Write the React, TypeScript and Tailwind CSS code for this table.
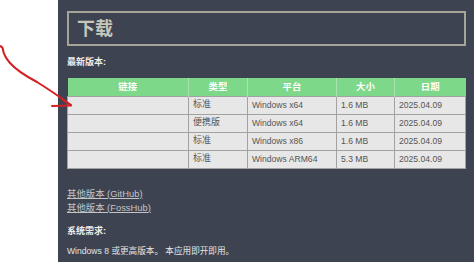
import React from 'react';

const rows = [
  { type: '标准', platform: 'Windows x64', size: '1.6 MB', date: '2025.04.09' },
  { type: '便携版', platform: 'Windows x64', size: '1.6 MB', date: '2025.04.09' },
  { type: '标准', platform: 'Windows x86', size: '1.6 MB', date: '2025.04.09' },
  { type: '标准', platform: 'Windows ARM64', size: '5.3 MB', date: '2025.04.09' },
];

const font = "font-['Liberation_Sans','Noto_Sans_CJK_SC',sans-serif]";

const App: React.FC = () => {
  return (
    <div className={`relative flex w-[474px] h-[262px] overflow-hidden bg-white ${font}`}>
      <div className="w-[58px] shrink-0 bg-white" />
      <div className="flex-1 bg-[#3e4352] pl-[9px] pr-[9px] pt-[11px]">
        <div className="h-[35px] border-2 border-[#a4a498] flex items-center pl-[8px]">
          <h1 className="text-[18px] font-bold text-[#c6c6bb] leading-none">下载</h1>
        </div>

        <p className="mt-[9px] text-[9px] leading-[14px] font-bold text-[#eeeeee]">最新版本:</p>

        <table className="mt-[9px] w-[398px] table-fixed border-collapse text-[8.6px] text-[#555]">
          <colgroup>
            <col className="w-[121px]" />
            <col className="w-[59px]" />
            <col className="w-[89px]" />
            <col className="w-[58px]" />
            <col className="w-[71px]" />
          </colgroup>
          <thead>
            <tr className="h-[18px] bg-[#7ed88a] text-white font-bold text-[9.4px]">
              <th className="border-r border-[#a9e4b0] text-center">链接</th>
              <th className="border-r border-[#a9e4b0] text-center">类型</th>
              <th className="border-r border-[#a9e4b0] text-center">平台</th>
              <th className="border-r border-[#a9e4b0] text-center">大小</th>
              <th className="text-center">日期</th>
            </tr>
          </thead>
          <tbody>
            {rows.map((r, i) => (
              <tr key={i} className="h-[18px] bg-[#e7e7e7]">
                <td className="border border-[#a2a2a2] px-[4px]"></td>
                <td className="border border-[#a2a2a2] px-[4px] text-[9px]">{r.type}</td>
                <td className="border border-[#a2a2a2] px-[4px]">{r.platform}</td>
                <td className="border border-[#a2a2a2] px-[4px]">{r.size}</td>
                <td className="border border-[#a2a2a2] px-[4px]">{r.date}</td>
              </tr>
            ))}
          </tbody>
        </table>

        <div className="mt-[18px] flex flex-col text-[9.4px] leading-[14px] text-[#c4c4c4]">
          <a className="underline w-fit">其他版本 (GitHub)</a>
          <a className="underline w-fit">其他版本 (FossHub)</a>
        </div>

        <p className="mt-[9px] text-[9px] leading-[14px] font-bold text-[#eeeeee]">系统需求:</p>
        <p className="mt-[6px] text-[8.6px] leading-[14px] text-[#e4e4e4]">Windows 8 或更高版本。 本应用即开即用。</p>
      </div>

      <svg className="absolute left-0 top-0 pointer-events-none" width="80" height="120" viewBox="0 0 80 120" fill="none">
        <path
          d="M0 46 Q3 47 3 50 Q4 56 10 63 Q18 72 37 82 Q53 92 71 105"
          stroke="#d42020"
          strokeWidth="2"
          strokeLinecap="round"
          strokeLinejoin="round"
        />
        <path d="M52 106 L71 105.5 L63 100" stroke="#d42020" strokeWidth="2" strokeLinecap="round" strokeLinejoin="round" />
      </svg>
    </div>
  );
};

export default App;
